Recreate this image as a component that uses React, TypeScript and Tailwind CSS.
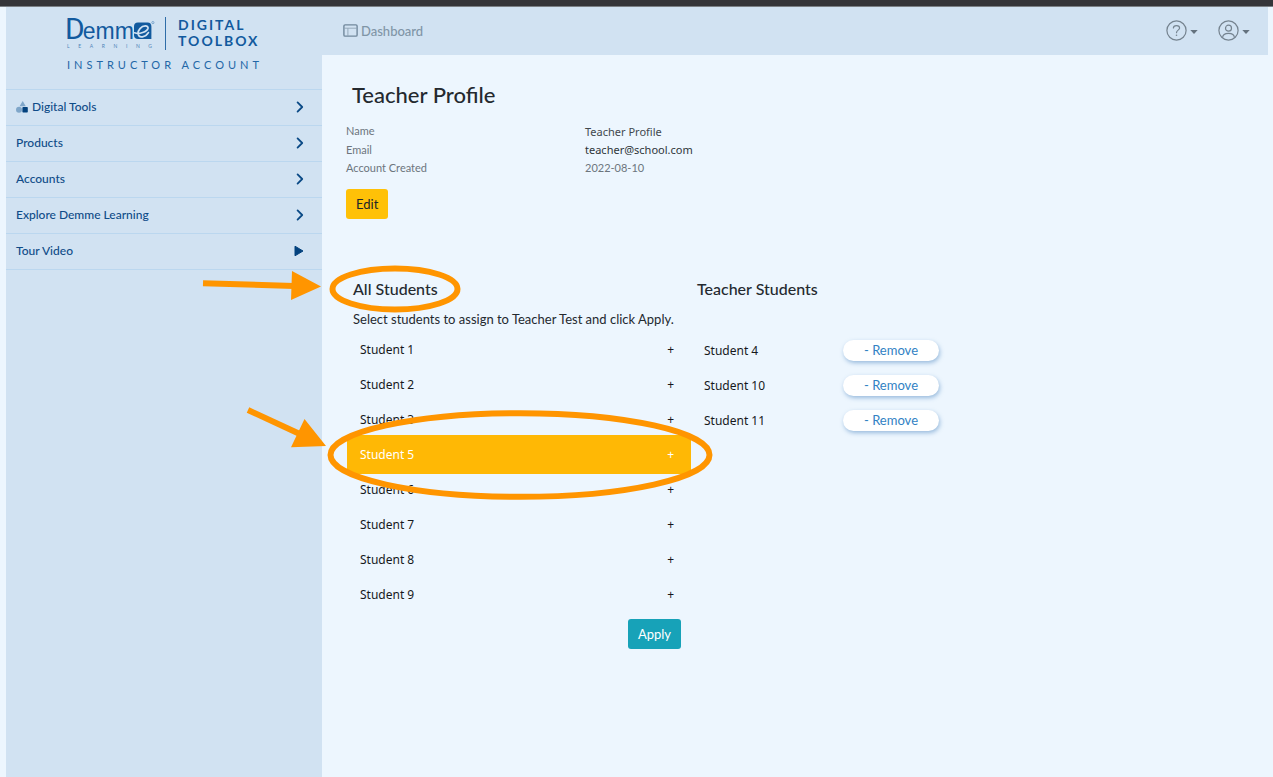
import React from "react";

const navItems = [
  { label: "Digital Tools", icon: "shapes", marker: "chevron" },
  { label: "Products", marker: "chevron" },
  { label: "Accounts", marker: "chevron" },
  { label: "Explore Demme Learning", marker: "chevron" },
  { label: "Tour Video", marker: "play" },
];

const allStudents = [1, 2, 3, 5, 6, 7, 8, 9];
const selectedStudent = 5;
const teacherStudents = [4, 10, 11];

function ShapesIcon() {
  return (
    <svg viewBox="0 0 12 12" className="mr-1 h-3 w-3" aria-hidden="true">
      <path d="M6.7 0 L9.8 5.2 H3.6 Z" fill="#7fa6c9" />
      <circle cx="3" cy="8.7" r="3" fill="#7fa6c9" />
      <rect x="6.4" y="6" width="5.4" height="5.6" rx="0.8" fill="#03427e" />
    </svg>
  );
}

function Chevron() {
  return (
    <svg viewBox="0 0 8 12" className="mr-[18px] h-3 w-2" aria-hidden="true">
      <path d="M1.6 1.4 L6.2 6 L1.6 10.6" fill="none" stroke="#0b4a86" strokeWidth="1.8" strokeLinecap="round" strokeLinejoin="round" />
    </svg>
  );
}

function Play() {
  return (
    <svg viewBox="0 0 10 12" className="mr-[18px] h-3 w-[10px]" aria-hidden="true">
      <path d="M1 1.2 L9 6 L1 10.8 Z" fill="#03427e" stroke="#03427e" strokeWidth="1" strokeLinejoin="round" />
    </svg>
  );
}

function Caret() {
  return (
    <svg viewBox="0 0 8 4" className="mt-[3px] h-1 w-2" aria-hidden="true">
      <path d="M0.3 0 H7.7 L4 4 Z" fill="#64727e" />
    </svg>
  );
}

function Logo() {
  return (
    <div className="ml-[61px] flex flex-col text-[#125a9e]">
      <div className="flex">
        <div className="w-[99px] border-r border-[#2f6da8]">
          <div className="flex h-6 items-baseline">
            <span className="-ml-[2px] font-['Roboto',sans-serif] text-[30px] leading-6">D</span>
            <span className="-ml-[2px] font-['Liberation_Sans',sans-serif] text-[23px] leading-6">emm</span>
            <svg viewBox="0 0 21 22" className="h-[22px] w-[21px] shrink-0 self-start" role="img" aria-label="e">
              <path d="M4 5.5 H13.5 Q17.4 5.5 17.4 9.5 V22 H4 Q0 22 0 18 V9.5 Q0 5.5 4 5.5 Z" fill="#125a9e" />
              <path d="M0.6 15.8 C5 17.6 13.2 14.8 14 11.2 C14.4 8.2 9.2 8 6 11.6 C2.6 15.6 4 20.6 8.4 19.8 C11 19.4 13.2 17.6 14.4 15.6" fill="none" stroke="#d1e2f2" strokeWidth="1.7" strokeLinecap="round" />
              <circle cx="18.9" cy="5.6" r="1.1" fill="none" stroke="#5b8fc0" strokeWidth="0.7" />
            </svg>
          </div>
          <div className="mt-px flex w-[85px] justify-between text-[5px] leading-[8px] text-[#4f85b8]">
            {"LEARNING".split("").map((letter, i) => (
              <span key={i}>{letter}</span>
            ))}
          </div>
        </div>
        <div className="ml-3 text-[14px] font-bold leading-4 tracking-[2px]">
          <div>DIGITAL</div>
          <div>TOOLBOX</div>
        </div>
      </div>
      <div className="mt-[7px] whitespace-nowrap text-[11px] leading-4 tracking-[4px] text-[#2367a7]">INSTRUCTOR ACCOUNT</div>
    </div>
  );
}

function Sidebar() {
  return (
    <aside className="w-[316px] shrink-0 bg-[#d1e2f2]">
      <div className="h-[82px] pt-[10px]">
        <Logo />
      </div>
      <nav className="border-t border-[#bbd7ef]">
        {navItems.map((item) => (
          <a
            key={item.label}
            href="#"
            className="flex h-9 items-center justify-between border-b border-[#bbd7ef] pb-px pl-[10px] text-[12px] font-medium text-[#0f4c88]"
          >
            <span className="flex items-center">
              {item.icon && <ShapesIcon />}
              {item.label}
            </span>
            {item.marker === "chevron" ? <Chevron /> : <Play />}
          </a>
        ))}
      </nav>
    </aside>
  );
}

function Header() {
  return (
    <header className="mr-[5px] flex h-12 items-center justify-between bg-[#d1e2f2] pb-[2px] pl-[21px] pr-[18px]">
      <a href="#" className="flex items-center gap-[3px] text-[13px] font-medium leading-[18px] text-[#8095a7]">
        <svg viewBox="0 0 15 13" className="h-[13px] w-[15px]" aria-hidden="true">
          <rect x="0.9" y="0.9" width="13.2" height="11.2" rx="1.2" fill="none" stroke="#71889c" strokeWidth="1.4" />
          <path d="M1 4.2 H14 M4.9 4.2 V12" fill="none" stroke="#8fa4b6" strokeWidth="0.9" />
        </svg>
        <span className="pt-[2px]">Dashboard</span>
      </a>
      <div className="flex gap-5">
        <button type="button" aria-label="Help" className="flex items-center gap-[3px]">
          <svg viewBox="0 0 21 21" className="h-[21px] w-[21px]" fill="none" stroke="#75838f" aria-hidden="true">
            <circle cx="10.5" cy="10.5" r="9.6" strokeWidth="1.2" />
            <path d="M7.4 8 C7.4 4.9 13.6 4.9 13.6 8 C13.6 10.3 10.5 10 10.5 12.7" strokeWidth="1.2" strokeLinecap="round" />
            <circle cx="10.5" cy="15.2" r="0.8" fill="#75838f" stroke="none" />
          </svg>
          <Caret />
        </button>
        <button type="button" aria-label="Account" className="flex items-center gap-[3px]">
          <svg viewBox="0 0 21 21" className="h-[21px] w-[21px]" fill="none" stroke="#75838f" aria-hidden="true">
            <circle cx="10.5" cy="10.5" r="9.6" strokeWidth="1.2" />
            <circle cx="10.5" cy="8.2" r="3" strokeWidth="1.2" />
            <path d="M4.6 17.6 C4.8 11.9 16.2 11.9 16.4 17.6" strokeWidth="1.2" />
          </svg>
          <Caret />
        </button>
      </div>
    </header>
  );
}

function Profile() {
  return (
    <section>
      <h1 className="ml-[6px] text-[22px] font-medium leading-7 text-[#24292f]">Teacher Profile</h1>
      <dl className="mt-[13px] grid grid-cols-[239px_1fr] text-[11px] leading-[18px] text-[#6c757d]">
        <dt>Name</dt>
        <dd className="pt-px font-['Noto_Sans',sans-serif] text-[#42484d]">Teacher Profile</dd>
        <dt>Email</dt>
        <dd className="font-['Noto_Sans',sans-serif] text-[#2f3539]">teacher@school.com</dd>
        <dt>Account Created</dt>
        <dd>2022-08-10</dd>
      </dl>
      <button type="button" className="mt-3 h-[30px] rounded-[3px] bg-[#ffc107] px-[10px] pt-px text-[13px] text-[#212529]">
        Edit
      </button>
    </section>
  );
}

function Students() {
  return (
    <section className="mt-[58px] flex items-start">
      <div className="w-[345px] shrink-0 pl-px">
        <h2 className="ml-[6px] text-[16px] font-medium leading-6">All Students</h2>
        <p className="ml-[6px] mt-[9px] whitespace-nowrap text-[13px] leading-[18px]">
          Select students to assign to Teacher Test and click Apply.
        </p>
        <ul className="mt-1 font-['Noto_Sans',sans-serif] text-[12px]">
          {allStudents.map((n) => (
            <li key={n}>
              <button
                type="button"
                aria-pressed={n === selectedStudent}
                className={
                  n === selectedStudent
                    ? "-my-[2px] flex h-[39px] w-full items-center justify-between bg-[#ffb805] pl-[13px] pr-[17px] text-white"
                    : "flex h-[35px] w-full items-center justify-between pl-[13px] pr-[17px] text-[#16191c]"
                }
              >
                <span>Student {n}</span>
                <span>+</span>
              </button>
            </li>
          ))}
        </ul>
        <div className="mt-[7px] flex justify-end pr-[10px]">
          <button type="button" className="h-[30px] rounded-[3px] bg-[#17a2b8] px-[10px] pt-px text-[13px] text-white">
            Apply
          </button>
        </div>
      </div>
      <div className="ml-[6px] w-[242px]">
        <h2 className="text-[16px] font-medium leading-6">Teacher Students</h2>
        <ul className="mt-8 font-['Noto_Sans',sans-serif] text-[12px] text-[#16191c]">
          {teacherStudents.map((n) => (
            <li key={n} className="flex h-[35px] items-center justify-between pl-[7px]">
              <span>Student {n}</span>
              <button
                type="button"
                aria-label={`Remove Student ${n}`}
                className="h-[21px] w-24 rounded-full bg-white font-['Lato',sans-serif] text-[13px] leading-[21px] text-[#3182c4] shadow-[1px_2px_4px_rgba(70,130,190,0.5)]"
              >
                - Remove
              </button>
            </li>
          ))}
        </ul>
      </div>
    </section>
  );
}

function Annotations() {
  return (
    <svg className="pointer-events-none absolute left-0 top-0 h-full w-full" fill="none" aria-hidden="true">
      <g stroke="#ff9500" strokeWidth="6">
        <ellipse cx="395" cy="289" rx="62.5" ry="20.5" />
        <ellipse cx="520" cy="455" rx="189.5" ry="41.8" />
        <path d="M203 283.3 L294 286" />
        <path d="M248 410 L302 435" />
      </g>
      <path d="M292 271 L321 286.5 L291 300 Z M304.5 419 L326 446 L291 447.3 Z" fill="#ff9500" />
    </svg>
  );
}

export default function App() {
  return (
    <div className="relative flex min-h-screen flex-col bg-[#edf6fe] font-['Lato',sans-serif] text-[#24292f]">
      <div className="h-[7px] border-b border-[#7b8085] bg-[#353539]" />
      <div className="flex flex-1 pl-[6px]">
        <Sidebar />
        <div className="min-w-0 flex-1">
          <Header />
          <main className="pl-6 pt-[26px]">
            <Profile />
            <Students />
          </main>
        </div>
      </div>
      <Annotations />
    </div>
  );
}
